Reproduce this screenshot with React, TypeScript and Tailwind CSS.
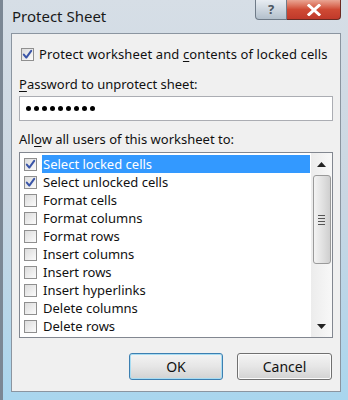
import React from "react";

const font = { fontFamily: '"Segoe UI", "Noto Sans", "Open Sans", sans-serif' };

const items = [
  { label: "Select locked cells", checked: true, selected: true },
  { label: "Select unlocked cells", checked: true },
  { label: "Format cells" },
  { label: "Format columns" },
  { label: "Format rows" },
  { label: "Insert columns" },
  { label: "Insert rows" },
  { label: "Insert hyperlinks" },
  { label: "Delete columns" },
  { label: "Delete rows" },
];

function CheckBox({ checked }: { checked?: boolean }) {
  return (
    <div className="w-[13px] h-[13px] shrink-0 border border-[#8f8f8f] bg-gradient-to-br from-[#dcdcdc] to-[#fbfbfb] flex items-center justify-center">
      {checked && (
        <svg width="11" height="11" viewBox="0 0 11 11">
          <path d="M1.8 5.6 L4.3 8.6 L9.2 1.8" fill="none" stroke="#3a55a8" strokeWidth="2" strokeLinecap="round" strokeLinejoin="round" />
        </svg>
      )}
    </div>
  );
}

function Scrollbar() {
  return (
    <div className="w-[21px] shrink-0 bg-gradient-to-r from-[#ececec] to-[#f8f8f8] flex flex-col items-center">
      <div className="h-[22px] w-full flex items-center justify-center">
        <svg width="9" height="5" viewBox="0 0 9 5"><path d="M0 5 L4.5 0 L9 5 Z" fill="#222" /></svg>
      </div>
      <div className="w-[18px] h-[89px] rounded-[3px] border border-[#9a9a9a] bg-gradient-to-r from-[#f3f3f3] via-[#e2e2e2] to-[#cfcfcf] flex flex-col items-center justify-center gap-[2px]">
        {[0, 1, 2, 3].map((i) => (
          <div key={i} className="w-[7px] h-[1px] bg-[#555]" />
        ))}
      </div>
      <div className="flex-1" />
      <div className="h-[22px] w-full flex items-center justify-center">
        <svg width="9" height="5" viewBox="0 0 9 5"><path d="M0 0 L4.5 5 L9 0 Z" fill="#222" /></svg>
      </div>
    </div>
  );
}

function Button({ label, primary }: { label: string; primary?: boolean }) {
  return (
    <div
      className={`h-[27px] rounded-[3px] border flex items-center justify-center text-[14px] text-[#111] bg-gradient-to-b from-[#f4f4f4] via-[#e6e6e6] to-[#d2d2d2] ${
        primary
          ? "w-[94px] border-[#3c7fb1] shadow-[inset_0_0_0_1px_#a8dcf2]"
          : "w-[95px] border-[#707070] shadow-[inset_0_0_0_1px_#fbfbfb]"
      }`}
    >
      {label}
    </div>
  );
}

export default function App() {
  return (
    <div
      className="w-[348px] h-[400px] overflow-hidden relative flex flex-col bg-gradient-to-b from-[#d6dee6] via-[#c9d6e2] to-[#a9d6ee] border-l-[3px] border-[#7b8794]"
      style={font}
    >
      {/* title bar */}
      <div className="h-[33px] shrink-0 flex items-start justify-between">
        <div className="pl-[9px] pt-[5px] text-[15px] text-[#1a1a1a] leading-[22px]">Protect Sheet</div>
        <div className="flex mr-[7px]">
          <div className="w-[32px] h-[20px] rounded-bl-[4px] border border-[#6f7b88] border-t-0 bg-gradient-to-b from-[#e8edf2] via-[#cdd6df] to-[#b3c0cc] flex items-center justify-center text-[13px] font-bold text-[#4a5560]">
            ?
          </div>
          <div className="w-[54px] h-[20px] rounded-br-[4px] border border-[#6b2a22] border-t-0 border-l-0 bg-gradient-to-b from-[#e9a593] via-[#cf4a34] to-[#c0392a] flex items-center justify-center">
            <svg width="14" height="12" viewBox="0 0 14 12">
              <path d="M2 1.5 L12 10.5 M12 1.5 L2 10.5" stroke="#fff" strokeWidth="3" strokeLinecap="square" />
            </svg>
          </div>
        </div>
      </div>

      {/* client area */}
      <div className="ml-[8px] mr-[7px] h-[359px] shrink-0 border border-[#8b95a0] bg-[#f0f0f0] flex flex-col text-[13px] text-[#111] leading-[18px] whitespace-nowrap">
        <div className="mt-[11px] ml-[9px] h-[18px] flex items-center gap-[5px]">
          <CheckBox checked />
          <span className="tracking-[0.12px]">
            Protect worksheet and <u className="decoration-1 underline-offset-2">c</u>ontents of locked cells
          </span>
        </div>

        <div className="mt-[12px] ml-[7px] h-[18px]">
          <u className="decoration-1 underline-offset-2">P</u>assword to unprotect sheet:
        </div>

        <div className="mt-[3px] ml-[7px] mr-[7px] h-[25px] border border-[#abadb3] bg-white flex items-center pl-[6px] gap-[3px]">
          {Array.from({ length: 9 }).map((_, i) => (
            <div key={i} className="w-[5px] h-[5px] rounded-full bg-black" />
          ))}
        </div>

        <div className="mt-[9px] ml-[7px] h-[18px]">
          All<u className="decoration-1 underline-offset-2">o</u>w all users of this worksheet to:
        </div>

        <div className="mt-[4px] ml-[7px] mr-[7px] h-[186px] border border-[#828790] bg-white flex">
          <div className="flex-1 pt-[2px] pl-[4px] pr-[1px] flex flex-col">
            {items.map((it) => (
              <div key={it.label} className="h-[18px] flex items-center gap-[5px]">
                <CheckBox checked={it.checked} />
                <div className={`flex-1 h-[18px] pl-[1px] ${it.selected ? "bg-[#3399ff] text-white" : ""}`}>{it.label}</div>
              </div>
            ))}
          </div>
          <Scrollbar />
        </div>

        <div className="mt-[15px] mr-[8px] flex justify-end gap-[14px]">
          <Button label="OK" primary />
          <Button label="Cancel" />
        </div>
      </div>
    </div>
  );
}
